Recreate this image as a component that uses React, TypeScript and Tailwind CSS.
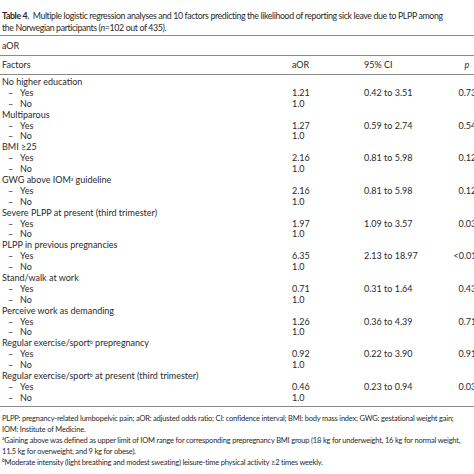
const rows: { label: React.ReactNode; aor: string; ci: string; p: string }[] = [
  { label: "No higher education", aor: "1.21", ci: "0.42 to 3.51", p: "0.73" },
  { label: "Multiparous", aor: "1.27", ci: "0.59 to 2.74", p: "0.54" },
  { label: "BMI ≥25", aor: "2.16", ci: "0.81 to 5.98", p: "0.12" },
  {
    label: (
      <>
        GWG above IOM<sup className="text-[5px]">a</sup> guideline
      </>
    ),
    aor: "2.16",
    ci: "0.81 to 5.98",
    p: "0.12",
  },
  { label: "Severe PLPP at present (third trimester)", aor: "1.97", ci: "1.09 to 3.57", p: "0.03" },
  { label: "PLPP in previous pregnancies", aor: "6.35", ci: "2.13 to 18.97", p: "<0.01" },
  { label: "Stand/walk at work", aor: "0.71", ci: "0.31 to 1.64", p: "0.43" },
  { label: "Perceive work as demanding", aor: "1.26", ci: "0.36 to 4.39", p: "0.71" },
  {
    label: (
      <>
        Regular exercise/sport<sup className="text-[5px]">b</sup> prepregnancy
      </>
    ),
    aor: "0.92",
    ci: "0.22 to 3.90",
    p: "0.91",
  },
  {
    label: (
      <>
        Regular exercise/sport<sup className="text-[5px]">b</sup> at present (third trimester)
      </>
    ),
    aor: "0.46",
    ci: "0.23 to 0.94",
    p: "0.03",
  },
];

function Row({ children, cols }: { children?: React.ReactNode; cols?: [string, string, string] }) {
  return (
    <div className="grid h-[10.9px] grid-cols-[290px_72px_94.5px_1fr] items-center whitespace-nowrap">
      <div>{children}</div>
      <div>{cols?.[0]}</div>
      <div>{cols?.[1]}</div>
      <div className={cols?.[2].startsWith("<") ? "-ml-[5px]" : ""}>{cols?.[2]}</div>
    </div>
  );
}

export default function App() {
  return (
    <div
      className="h-[474px] w-[474px] overflow-hidden bg-white pl-[2px] text-[#2a2a2a]"
      style={{ fontFamily: "Lato, 'Open Sans', sans-serif" }}
    >
      <div className="pt-[10px] text-[8.8px] leading-[11.5px] tracking-[-0.38px]">
        <div className="whitespace-nowrap">
          <span className="font-bold">Table 4.</span>&nbsp; Multiple logistic regression analyses and 10 factors
          predicting the likelihood of reporting sick leave due to PLPP among
        </div>
        <div className="whitespace-nowrap">
          the Norwegian participants (<i>n</i>=102 out of 435).
        </div>
      </div>

      <div className="mt-[2px] -ml-[2px] border-t border-[#8a8a8a]" />
      <div className="flex h-[19px] items-center text-[9px]">aOR</div>
      <div className="-ml-[2px] border-t border-[#8a8a8a]" />
      <div className="text-[9px]">
        <div className="grid h-[18px] grid-cols-[290px_72px_94.5px_1fr] items-center">
          <div>Factors</div>
          <div>aOR</div>
          <div>95% CI</div>
          <div className="pl-[6px] italic">p</div>
        </div>
      </div>
      <div className="-ml-[2px] border-t border-[#8a8a8a]" />

      <div className="text-[9px]">
        {rows.map((r, i) => (
          <div key={i}>
            <Row>{r.label}</Row>
            <Row cols={[r.aor, r.ci, r.p]}>
              <span className="inline-block w-[18px] pl-[6px]">–</span>Yes
            </Row>
            <Row cols={["1.0", "", ""]}>
              <span className="inline-block w-[18px] pl-[6px]">–</span>No
            </Row>
          </div>
        ))}
      </div>

      <div className="mt-[4px] -ml-[2px] border-t border-[#8a8a8a]" />
      <div className="pt-[6px] text-[7.5px] leading-[11px] tracking-[-0.2px]">
        <div className="whitespace-nowrap">
          PLPP: pregnancy-related lumbopelvic pain; aOR: adjusted odds ratio; CI: confidence interval; BMI: body mass
          index; GWG: gestational weight gain;
        </div>
        <div>IOM: Institute of Medicine.</div>
        <div className="whitespace-nowrap">
          <sup className="text-[5px]">a</sup>Gaining above was defined as upper limit of IOM range for corresponding
          prepregnancy BMI group (18 kg for underweight, 16 kg for normal weight,
        </div>
        <div>11.5 kg for overweight, and 9 kg for obese).</div>
        <div className="whitespace-nowrap">
          <sup className="text-[5px]">b</sup>Moderate intensity (light breathing and modest sweating) leisure-time
          physical activity ≥2 times weekly.
        </div>
      </div>
    </div>
  );
}
